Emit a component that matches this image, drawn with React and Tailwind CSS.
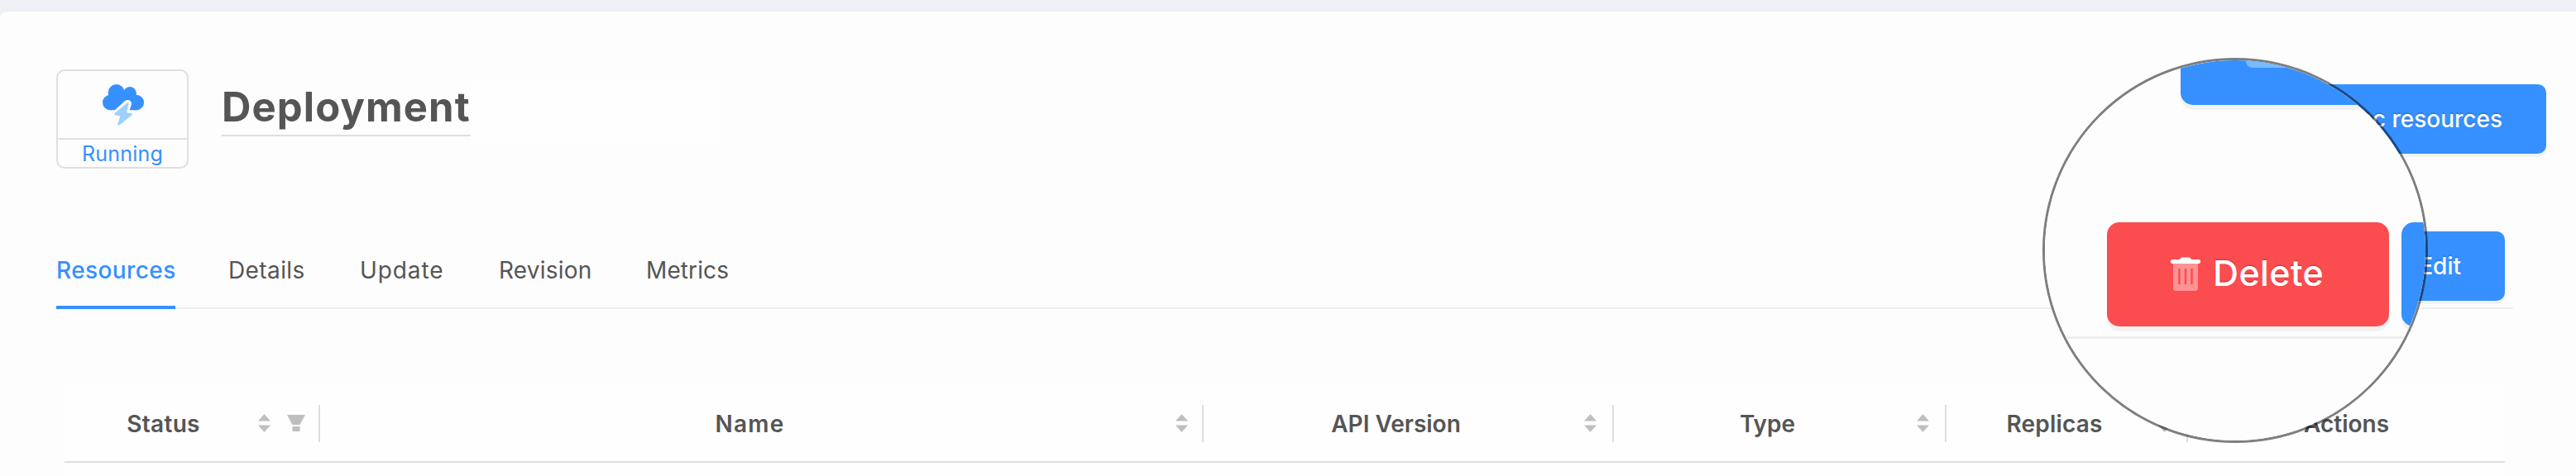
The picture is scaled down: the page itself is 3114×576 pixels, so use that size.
const tabs = [
  { label: 'Resources', size: 'w-36 tracking-[0.4px]', active: true },
  { label: 'Details', size: 'w-[95px] tracking-[0.4px]' },
  { label: 'Update', size: 'w-[104px] tracking-[0.9px]' },
  { label: 'Revision', size: 'w-[114px] tracking-[0.2px]' },
  { label: 'Metrics', size: 'w-[102px] tracking-[0.1px]' },
];

const columns = [
  { label: 'Status', width: 'w-[309px]', text: 'w-[234px] pl-[5px] tracking-[0.3px]', sorter: true, filter: true },
  { label: 'Name', width: 'w-[1068px]', text: 'w-[1034px] pl-[5px] tracking-[1.2px]', sorter: true },
  { label: 'API Version', width: 'w-[496px]', text: 'w-[460px] pl-[5px]', sorter: true },
  { label: 'Type', width: 'w-[402px]', text: 'w-[366px] pl-[5px]', sorter: true },
  { label: 'Replicas', width: 'w-[292px]', text: 'w-[256px] pl-[5px] tracking-[0.2px]', sorter: true },
  { label: 'Actions', width: 'w-[383px]', text: 'w-[383px]' },
];

function StormIcon() {
  return (
    <svg className="h-[60px] w-[50px]" viewBox="0 0 50 60">
      <g fill="#3690ff">
        <circle cx="16.7" cy="10" r="10" />
        <circle cx="33" cy="10.6" r="7.7" />
        <circle cx="9.3" cy="22" r="9.3" />
        <circle cx="40.7" cy="22" r="9.3" />
        <path d="M6.700 10h34v21.300H9.300z" />
      </g>
      <path d="M14 32l12-11c3.500-3.500 9-2 9 3L32.500 32z" fill="#fdfdfd" />
      <path
        d="M30.500 23.500 15.500 36l7.500 1.500L19.500 48.500 34.500 36.500l-7-1.500z"
        fill="#9dd0ff"
        stroke="#9dd0ff"
        strokeWidth="2.500"
        strokeLinejoin="round"
      />
    </svg>
  );
}

function Sorter() {
  return (
    <svg className="h-[22px] w-[15px] shrink-0" viewBox="0 0 15 22" fill="#bfbfbf">
      <path d="M7.500 0 15 8.500H0z" />
      <path d="M0 13.500h15L7.500 22z" />
    </svg>
  );
}

function FilterIcon() {
  return (
    <svg className="h-5 w-[22px]" viewBox="0 0 22 20" fill="#bfbfbf">
      <path d="M0 0h22l-6.500 12h-9z" />
      <path d="M6.500 14h9v6h-9z" />
    </svg>
  );
}

function TrashIcon() {
  return (
    <svg className="h-[41px] w-9" viewBox="0 0 36 41">
      <path
        d="M3 8h30v29.500a3.500 3.500 0 0 1-3.500 3.500h-23A3.500 3.500 0 0 1 3 37.500z"
        fill="#fff"
        fillOpacity="0.4"
      />
      <path d="M10.500 14v19M18 14v19M25.500 14v19" stroke="#fb4c4f" strokeWidth="2.500" />
      <path
        d="M2 3h8.500L13 .5h10L25.500 3H34a2 2 0 0 1 2 2v1a2 2 0 0 1-2 2H2a2 2 0 0 1-2-2V5a2 2 0 0 1 2-2z"
        fill="#fff"
      />
    </svg>
  );
}

// Magnified copy of the toolbar, clipped by the round glass.
function Lens() {
  return (
    <div className="absolute top-[70px] left-[2469px] size-[466px] rounded-full border-[3px] border-black/50">
      <div className="size-[460px] overflow-hidden rounded-full bg-[#fdfdfd]">
        <div className="ml-[164px] flex h-[54px] w-[400px] items-end rounded-b-[15px] bg-[#3690ff] shadow-[0_6px_0_rgba(0,0,0,0.045)]">
          <div className="mb-[45px] ml-[79px] h-10 w-[60px] rounded-[8px] bg-[#78bbff]" />
        </div>
        <div className="mt-[141.5px] ml-[75px] flex w-[600px] gap-[15px]">
          <div className="flex h-[126px] w-[341px] items-center rounded-[15px] bg-[#fb4c4f] pl-[77px] shadow-[0_6px_0_rgba(0,0,0,0.045)]">
            <TrashIcon />
            <span className="-mt-[3px] ml-[15px] text-[43px] font-medium tracking-[0.4px] text-white [text-shadow:0_-2px_0_rgba(0,0,0,0.12)]">
              Delete
            </span>
          </div>
          <div className="h-[126px] w-[200px] rounded-[15px] bg-[#3690ff] shadow-[0_6px_0_rgba(0,0,0,0.045)]" />
        </div>
        <div className="mt-3 h-[3px] bg-[#eeeeee]" />
      </div>
    </div>
  );
}

export default function App() {
  return (
    <div className="relative h-[576px] w-[3114px] overflow-hidden bg-[#eff0f5] pt-3.5 font-['Inter',sans-serif] text-[#555]">
      <main className="h-[562px] rounded-tl-lg bg-[#fdfdfd]">
        <header className="flex h-[266px] items-start pt-[70px] pl-[68px]">
          <div className="flex h-[120px] w-40 flex-col rounded-[10px] border-2 border-[#dfdfdf]">
            <div className="flex h-[83px] shrink-0 justify-center border-b-2 border-[#dfdfdf] pt-4 pl-0.5">
              <StormIcon />
            </div>
            <div className="text-center text-[25px] leading-[34px] tracking-[0.2px] text-[#3690ff]">
              Running
            </div>
          </div>
          <div className="mt-2.5 ml-10 h-[71px] border-b-2 border-[#dfdfdf]">
            <h1 className="w-[301px] text-[49px] leading-[71px] font-bold tracking-[1.1px] whitespace-nowrap">
              Deployment
            </h1>
          </div>
          <div className="mt-2.5 h-20 w-[300px] bg-[#fefefe]" />
          <button className="mt-[18px] mr-9 ml-auto h-[84px] w-[400px] rounded-[10px] bg-[#3690ff] pr-[53px] text-right text-[28px] font-medium text-white shadow-[0_4px_0_rgba(0,0,0,0.045)] [text-shadow:0_-2px_0_rgba(0,0,0,0.12)]">
            Sync resources
          </button>
        </header>

        <nav className="mr-[76px] ml-[68px] flex h-[94px] justify-between border-b-2 border-[#eeeeee]">
          <div className="flex gap-16">
            {tabs.map((tab) => (
              <div
                key={tab.label}
                className={`${tab.size} h-[94px] pt-[27px] text-[28px] leading-[40px] whitespace-nowrap ${
                  tab.active ? 'border-b-4 border-[#3690ff] font-medium text-[#3690ff]' : ''
                }`}
              >
                {tab.label}
              </div>
            ))}
          </div>
          <button className="mr-2.5 h-[84px] w-[180px] rounded-[10px] bg-[#3690ff] pr-[53px] text-right text-[28px] font-medium text-white shadow-[0_4px_0_rgba(0,0,0,0.045)] [text-shadow:0_-2px_0_rgba(0,0,0,0.12)]">
            Edit
          </button>
        </nav>

        <div className="mt-[92px] ml-[78px] h-[110px] w-[2950px] bg-[#fefefe]">
          <div className="flex h-[94px] items-center border-b-2 border-[#dedede]">
            {columns.map((col) => (
              <div
                key={col.label}
                className={`${col.width} flex h-[45px] items-center ${
                  col.sorter ? 'border-r-2 border-[#dedede]' : ''
                }`}
              >
                <span className={`${col.text} shrink-0 pt-px text-center text-[28px] font-semibold`}>
                  {col.label}
                </span>
                {col.sorter && <Sorter />}
                {col.filter && (
                  <span className="ml-[20px]">
                    <FilterIcon />
                  </span>
                )}
              </div>
            ))}
          </div>
        </div>
      </main>

      <Lens />
    </div>
  );
}
